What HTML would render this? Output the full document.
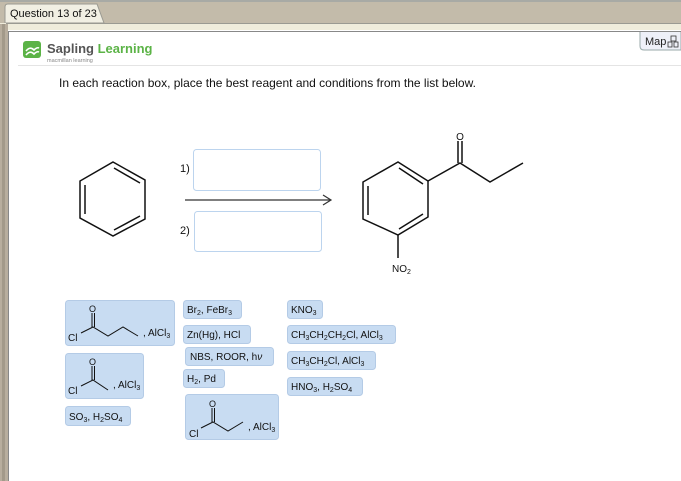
<!DOCTYPE html>
<html><head><meta charset="utf-8"><style>
html,body{margin:0;padding:0;width:681px;height:481px;overflow:hidden;background:#fff;font-family:"Liberation Sans",Arial,sans-serif}
svg{position:absolute;left:0;top:0}
</style></head><body>
<svg width="681" height="481" viewBox="0 0 681 481" font-family="Liberation Sans, Arial, sans-serif">
<rect x="0" y="0" width="681" height="481" fill="#fff"/>
<rect x="0" y="0" width="681" height="24" fill="#c3bbaa"/>
<line x1="0" y1="1" x2="681" y2="1" fill="none" stroke="#8c9aa0"/>
<path d="M5 23 L5 7 Q5 4 8 4 L97 4 L104 23 Z" fill="#f1efe3" stroke="#9a9a92"/>
<text x="10" y="17" font-size="11" fill="#111">Question 13 of 23</text>
<rect x="0" y="23" width="681" height="7" fill="#efecdb"/>
<line x1="6" y1="23.5" x2="681" y2="23.5" stroke="#9a9a92"/>
<rect x="0" y="24" width="8" height="457" fill="#b8ae9e"/>
<rect x="2" y="24" width="3" height="457" fill="#a39a8a"/>
<line x1="8" y1="31.5" x2="681" y2="31.5" stroke="#888"/>
<line x1="8.5" y1="31" x2="8.5" y2="481" stroke="#888"/>
<!-- Map button -->
<path d="M640 32 L640 46 Q640 50 644 50 L681 50 L681 32" fill="#eef0f8" stroke="#9aa"/>
<text x="645" y="45" font-size="11" fill="#222">Map</text>
<g fill="none" stroke="#333" stroke-width="0.8"><rect x="671" y="36" width="5" height="5"/><rect x="668" y="42" width="4" height="5"/><rect x="674" y="42" width="4" height="5"/></g>
<!-- logo -->
<rect x="23" y="41" width="18" height="17" rx="3" fill="#5bb346"/>
<path d="M26 51 Q30 46 34 50 Q37 47 39 48 M26 55 Q30 50 34 54 Q37 51 39 52" stroke="#fff" stroke-width="1.6" fill="none"/>
<text x="47" y="53" font-size="13" font-weight="bold" fill="#555">Sapling <tspan fill="#5bb346">Learning</tspan></text>
<text x="47" y="62" font-size="5.5" fill="#888">macmillan learning</text>
<line x1="18" y1="65.5" x2="681" y2="65.5" stroke="#e4e4e4"/>
<text x="59" y="87" font-size="12" fill="#111">In each reaction box, place the best reagent and conditions from the list below.</text>
<!-- benzene -->
<g stroke="#111" stroke-width="1.5" fill="none">
<path d="M113 162 L145 180 L145 219 L113 236 L80 218 L80 181 Z"/>
<path d="M114 168 L140 183 M114 230 L140 216 M85 185 L85 214"/>
</g>
<!-- boxes -->
<rect x="193.5" y="149.5" width="127" height="41" rx="3" fill="#fff" stroke="#bcd4ee"/>
<rect x="194.5" y="211.5" width="127" height="40" rx="3" fill="#fff" stroke="#bcd4ee"/>
<text x="180" y="172" font-size="11" fill="#111">1)</text>
<text x="180" y="234" font-size="11" fill="#111">2)</text>
<g stroke="#333" stroke-width="1.2" fill="none"><path d="M185 200 L331 200 M323 195 L331 200 L323 205"/></g>
<!-- product -->
<g stroke="#111" stroke-width="1.5" fill="none">
<path d="M398 162 L428 181 L428 217 L398 235 L363 219 L363 182 Z"/>
<path d="M399 168 L423 184 M399 229 L423 214 M368 186 L368 215"/>
<path d="M428 181 L460 163 L490 182 L523 163"/>
<path d="M458 163 L458 141 M462 163 L462 141"/>
<path d="M398 235 L398 258"/>
</g>
<text x="460" y="140" font-size="10" text-anchor="middle" fill="#111">O</text>
<text x="392" y="272" font-size="10" fill="#111">NO<tspan font-size="7" dy="2">2</tspan></text>
<!-- tiles -->
<g fill="#c8dcf2" stroke="#b4cbe6" stroke-width="1">
<rect x="65.5" y="300.5" width="109" height="45" rx="3"/>
<rect x="65.5" y="353.5" width="78" height="45" rx="3"/>
<rect x="65.5" y="406.5" width="65" height="19" rx="3"/>
<rect x="183.5" y="300.5" width="58" height="18" rx="3"/>
<rect x="183.5" y="325.5" width="67" height="18" rx="3"/>
<rect x="185.5" y="347.5" width="88" height="18" rx="3"/>
<rect x="183.5" y="369.5" width="41" height="18" rx="3"/>
<rect x="185.5" y="394.5" width="93" height="45" rx="3"/>
<rect x="287.5" y="300.5" width="35" height="18" rx="3"/>
<rect x="287.5" y="325.5" width="108" height="18" rx="3"/>
<rect x="287.5" y="351.5" width="88" height="18" rx="3"/>
<rect x="287.5" y="377.5" width="75" height="18" rx="3"/>
</g>
<g stroke="#111" stroke-width="1" fill="none">
<path d="M81 333 L93 327 L108 336 L123 327 L138 336 M92 327 L92 313 M94.5 327 L94.5 313"/>
<path d="M81 386 L93 380 L108 390 M92 380 L92 366 M94.5 380 L94.5 366"/>
<path d="M201 428 L213 422 L228 431 L243 422 M212 422 L212 408 M214.5 422 L214.5 408"/>
</g>
<g font-size="10" fill="#111">
<text x="89" y="312" font-size="9">O</text>
<text x="68" y="341">Cl</text>
<text x="143" y="336">, AlCl<tspan font-size="7" dy="2">3</tspan></text>
<text x="89" y="365" font-size="9">O</text>
<text x="68" y="394">Cl</text>
<text x="113" y="388">, AlCl<tspan font-size="7" dy="2">3</tspan></text>
<text x="209" y="407" font-size="9">O</text>
<text x="189" y="437">Cl</text>
<text x="248" y="430">, AlCl<tspan font-size="7" dy="2">3</tspan></text>
<text x="69" y="420">SO<tspan font-size="7" dy="2">3</tspan><tspan dy="-2">, H</tspan><tspan font-size="7" dy="2">2</tspan><tspan dy="-2">SO</tspan><tspan font-size="7" dy="2">4</tspan></text>
<text x="187" y="313">Br<tspan font-size="7" dy="2">2</tspan><tspan dy="-2">, FeBr</tspan><tspan font-size="7" dy="2">3</tspan></text>
<text x="187" y="338">Zn(Hg), HCl</text>
<text x="190" y="360">NBS, ROOR, h<tspan font-style="italic">ν</tspan></text>
<text x="187" y="382">H<tspan font-size="7" dy="2">2</tspan><tspan dy="-2">, Pd</tspan></text>
<text x="291" y="313">KNO<tspan font-size="7" dy="2">3</tspan></text>
<text x="291" y="338">CH<tspan font-size="7" dy="2">3</tspan><tspan dy="-2">CH</tspan><tspan font-size="7" dy="2">2</tspan><tspan dy="-2">CH</tspan><tspan font-size="7" dy="2">2</tspan><tspan dy="-2">Cl, AlCl</tspan><tspan font-size="7" dy="2">3</tspan></text>
<text x="291" y="364">CH<tspan font-size="7" dy="2">3</tspan><tspan dy="-2">CH</tspan><tspan font-size="7" dy="2">2</tspan><tspan dy="-2">Cl, AlCl</tspan><tspan font-size="7" dy="2">3</tspan></text>
<text x="291" y="390">HNO<tspan font-size="7" dy="2">3</tspan><tspan dy="-2">, H</tspan><tspan font-size="7" dy="2">2</tspan><tspan dy="-2">SO</tspan><tspan font-size="7" dy="2">4</tspan></text>
</g>
</svg>
</body></html>
